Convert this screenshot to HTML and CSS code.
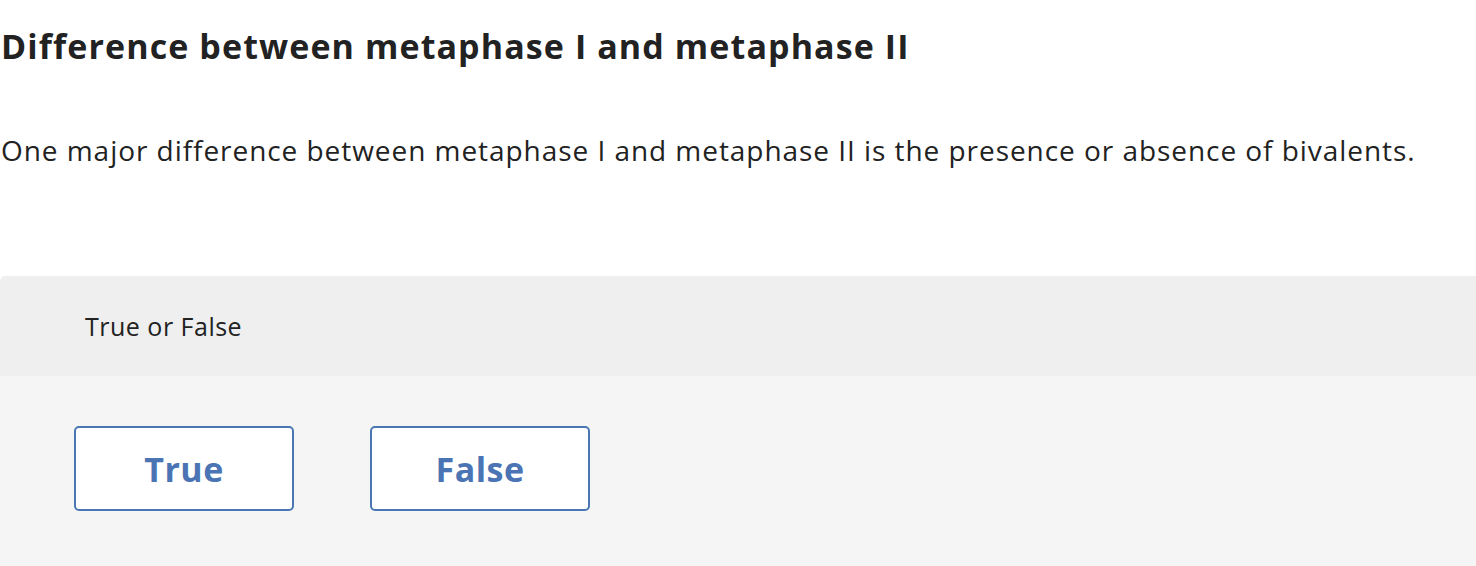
FILE: index.html
```html
<!DOCTYPE html>
<html>
<head>
<meta charset="utf-8">
<link rel="stylesheet" href="styles.css">
</head>
<body>
<div class="page">
  <h1 class="title">Difference between metaphase I and metaphase II</h1>
  <p class="prompt">One major difference between metaphase I and metaphase II is the presence or absence of bivalents.</p>
  <div class="panel">
    <div class="panel-head">True or False</div>
    <div class="panel-body">
      <button class="choice">True</button>
      <button class="choice">False</button>
    </div>
  </div>
</div>
</body>
</html>
```
FILE: styles.css
```css
html, body {
  margin: 0;
  padding: 0;
  background: #ffffff;
}
.page {
  font-family: "Open Sans", "Noto Sans", sans-serif;
  color: #222222;
  padding-top: 22px;
}
.title {
  margin: 0;
  font-size: 34px;
  font-weight: 700;
  line-height: 48px;
  letter-spacing: 1.1px;
  padding-left: 1px;
}
.prompt {
  margin: 0;
  margin-top: 60px;
  font-size: 28px;
  line-height: 40px;
  letter-spacing: 0.95px;
  padding-left: 1px;
}
.panel {
  margin-top: 106px;
  margin-right: -10px;
  border-top-left-radius: 5px;
  overflow: hidden;
}
.panel-head {
  background: #efefef;
  height: 100px;
  box-sizing: border-box;
  display: flex;
  align-items: center;
  padding-left: 85px;
  font-size: 25px;
  letter-spacing: 0.5px;
}
.panel-body {
  background: #f5f5f5;
  display: flex;
  gap: 76px;
  padding: 50px 74px 70px;
}
.choice {
  width: 220px;
  height: 85px;
  box-sizing: border-box;
  background: #ffffff;
  border: 2px solid #4a76b5;
  border-radius: 5px;
  font-family: "Open Sans", "Noto Sans", sans-serif;
  font-size: 34px;
  font-weight: 700;
  letter-spacing: 0.5px;
  color: #4a74b3;
  cursor: pointer;
}
```
